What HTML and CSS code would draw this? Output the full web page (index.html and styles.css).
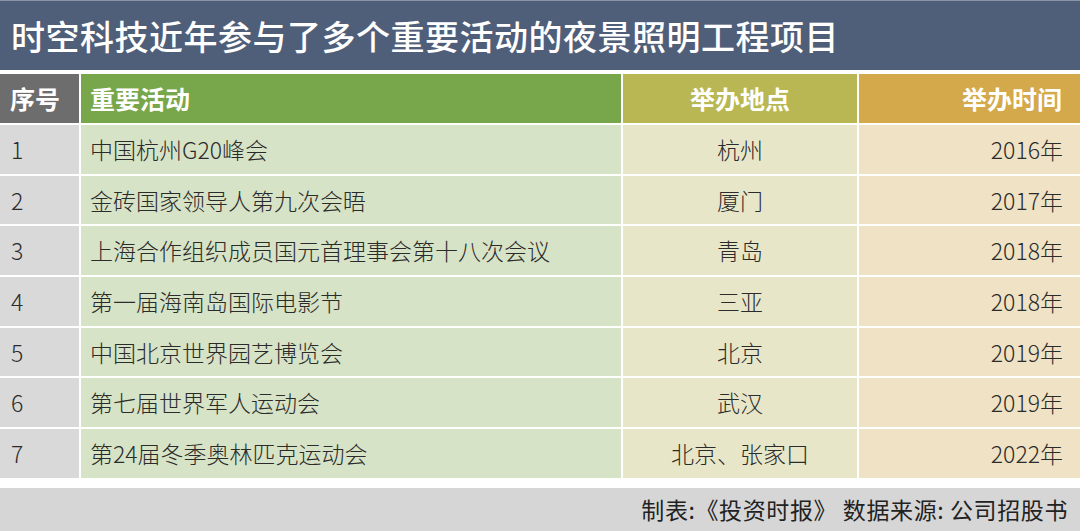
FILE: index.html
```html
<!DOCTYPE html>
<html lang="zh-CN">
<head>
<meta charset="utf-8">
<link rel="stylesheet" href="styles.css">
</head>
<body>
<div class="page">
  <div class="title">时空科技近年参与了多个重要活动的夜景照明工程项目</div>
  <div class="table">
    <div class="hd c1">序号</div>
    <div class="hd c2">重要活动</div>
    <div class="hd c3">举办地点</div>
    <div class="hd c4">举办时间</div>

    <div class="td c1">1</div><div class="td c2">中国杭州G20峰会</div><div class="td c3">杭州</div><div class="td c4">2016年</div>
    <div class="td c1">2</div><div class="td c2">金砖国家领导人第九次会晤</div><div class="td c3">厦门</div><div class="td c4">2017年</div>
    <div class="td c1">3</div><div class="td c2">上海合作组织成员国元首理事会第十八次会议</div><div class="td c3">青岛</div><div class="td c4">2018年</div>
    <div class="td c1">4</div><div class="td c2">第一届海南岛国际电影节</div><div class="td c3">三亚</div><div class="td c4">2018年</div>
    <div class="td c1">5</div><div class="td c2">中国北京世界园艺博览会</div><div class="td c3">北京</div><div class="td c4">2019年</div>
    <div class="td c1">6</div><div class="td c2">第七届世界军人运动会</div><div class="td c3">武汉</div><div class="td c4">2019年</div>
    <div class="td c1">7</div><div class="td c2">第24届冬季奥林匹克运动会</div><div class="td c3">北京、张家口</div><div class="td c4">2022年</div>
  </div>
  <div class="footer">制表:《投资时报》 数据来源: 公司招股书</div>
</div>
</body>
</html>
```

FILE: styles.css
```css
html, body {
  margin: 0;
  padding: 0;
  background: #ffffff;
}

.page {
  width: 1080px;
  height: 531px;
  overflow: hidden;
  display: flex;
  flex-direction: column;
  font-family: "Noto Sans CJK SC", "Noto Sans", sans-serif;
}

.title {
  height: 70px;
  box-sizing: border-box;
  border-top: 1px solid #8993a5;
  background: #4f5e79;
  color: #ffffff;
  font-size: 34px;
  font-weight: 500;
  letter-spacing: 0.5px;
  line-height: 1;
  display: flex;
  align-items: center;
  padding-left: 11px;
}

.table {
  margin-top: 4px;
  display: grid;
  grid-template-columns: 79px 540px 234px 1fr;
  grid-template-rows: 49px repeat(7, 48.7px);
  gap: 2px;
}

.hd {
  color: #ffffff;
  font-size: 25px;
  font-weight: 700;
  display: flex;
  align-items: center;
  line-height: 1;
}

.hd.c1 { background: #6d6d6d; padding-left: 10px; }
.hd.c2 { background: #78a64a; padding-left: 9px; }
.hd.c3 { background: #b8b753; justify-content: center; }
.hd.c4 { background: #d3a94b; justify-content: flex-end; padding-right: 18px; }

.td {
  color: #2b2b2b;
  font-size: 23px;
  font-weight: 300;
  display: flex;
  align-items: center;
  line-height: 1;
}

.td.c1 { background: #d9d9d9; padding-left: 11px; }
.td.c2 { background: #d7e3c6; padding-left: 9px; }
.td.c3 { background: #e7e6c8; justify-content: center; }
.td.c4 { background: #efe2c5; justify-content: flex-end; padding-right: 17px; }

.footer {
  margin-top: 10px;
  flex: 1;
  background: #d6d6d6;
  color: #222222;
  font-size: 23px;
  font-weight: 400;
  letter-spacing: 0.6px;
  display: flex;
  align-items: center;
  justify-content: flex-end;
  padding-right: 12px;
  white-space: pre;
}
```
